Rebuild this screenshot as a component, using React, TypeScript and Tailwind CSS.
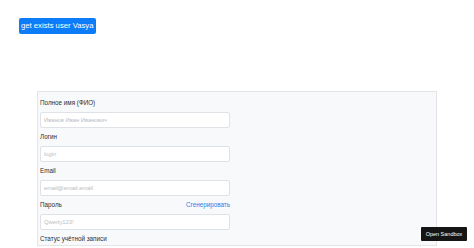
import * as React from 'react';

const fields = [
  { label: 'Полное имя (ФИО)', placeholder: 'Иванов Иван Иванович' },
  { label: 'Логин', placeholder: 'login' },
  { label: 'Email', placeholder: 'email@email.email' },
  { label: 'Пароль', placeholder: 'Qwerty123!', action: 'Сгенерировать' },
];

export default function App() {
  return (
    <div className="relative h-[248px] w-[474px] overflow-hidden bg-white font-['Liberation_Sans',Arial,sans-serif]">
      <div className="flex pl-[19px] pt-[18px]">
        <button className="block h-[16px] rounded-[2px] bg-[#0d7cf8] px-[2px] text-[7.7px] leading-[16px] text-white">
          get exists user Vasya
        </button>
      </div>
      <div className="ml-[37px] mt-[57px] w-[400px] border border-[#e3e5e8] bg-[#f8f9fa] px-[2px] pt-[5px]">
        {fields.map((f) => (
          <div key={f.label} className="mb-[3px] w-[190px]">
            <div className="flex h-[12px] items-center justify-between text-[6.3px] text-[#2a2e33]">
              <span>{f.label}</span>
              {f.action && <span className="text-[#2b7de9]">{f.action}</span>}
            </div>
            <div className="mt-[3px] flex h-[16px] items-center rounded-[2px] border border-[#dfe2e6] bg-white px-[3px] text-[5.8px] text-[#b9bdc2]">
              {f.placeholder}
            </div>
          </div>
        ))}
        <div className="h-[12px] text-[6.3px] leading-[12px] text-[#2a2e33]">Статус учётной записи</div>
      </div>
      <div className="absolute left-[421px] top-[227px] flex h-[14px] w-[46px] items-center justify-center rounded-[1px] bg-[#151515] text-[5.5px] text-white">
        Open Sandbox
      </div>
    </div>
  );
}
